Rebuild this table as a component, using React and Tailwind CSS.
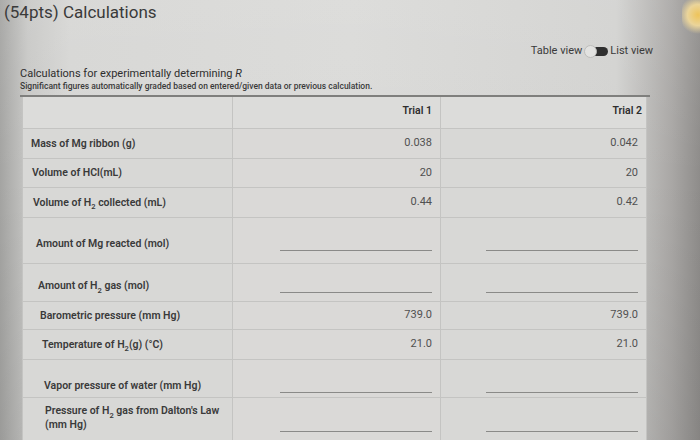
import React from "react";

const H2 = () => (
  <span>
    H<sub className="text-[7.5px] align-[-2px]">2</sub>
  </span>
);

const rows = [
  { label: <>Mass of Mg ribbon (g)</>, v1: "0.038", v2: "0.042", h: "h-[30px]", pl: "pl-[8px]" },
  { label: <>Volume of HCl(mL)</>, v1: "20", v2: "20", h: "h-[29px]", pl: "pl-[9px]" },
  { label: <>Volume of <H2 /> collected (mL)</>, v1: "0.44", v2: "0.42", h: "h-[30px]", pl: "pl-[10px]" },
  { label: <>Amount of Mg reacted (mol)</>, input: true, h: "h-[46px]", pl: "pl-[13px]", pb: "pb-[12px]" },
  { label: <>Amount of <H2 /> gas (mol)</>, input: true, h: "h-[38px]", pl: "pl-[15px]", pb: "pb-[8px]" },
  { label: <>Barometric pressure (mm Hg)</>, v1: "739.0", v2: "739.0", h: "h-[28px]", pl: "pl-[17px]" },
  { label: <>Temperature of H<sub className="text-[7.5px] align-[-2px]">2</sub>(g) (°C)</>, v1: "21.0", v2: "21.0", h: "h-[30px]", pl: "pl-[19px]" },
  { label: <>Vapor pressure of water (mm Hg)</>, input: true, h: "h-[38px]", pl: "pl-[21px]", pb: "pb-[4px]" },
  { label: <>Pressure of <H2 /> gas from Dalton's Law<br />(mm Hg)</>, input: true, h: "h-[44px]", pl: "pl-[22px]", pb: "pb-[9px]" },
];

export default function App() {
  return (
    <div className="relative w-[700px] h-[440px] overflow-hidden font-['Roboto',sans-serif] text-[#333] bg-[linear-gradient(to_right,#a4a4a2_0%,#c8c8c6_4%,#d6d6d4_10%,#dadad8_50%,#d2d2d0_88%,#a9a7a5_96%,#8e8c8a_100%)]">
      <div className="absolute inset-0 pointer-events-none bg-[linear-gradient(to_bottom,rgba(255,255,255,0.08)_0%,rgba(0,0,0,0)_40%,rgba(0,0,0,0.06)_100%)]" />
      <div className="absolute right-[-14px] top-[-6px] w-[32px] h-[42px] rounded-full bg-[radial-gradient(circle,#eec45a_0%,#ead49a_40%,rgba(230,220,190,0)_72%)] pointer-events-none" />

      <div className="relative">
        <div className="pl-[4px] pt-[1px] text-[17px] leading-[22px] text-[#3a3a3a]">(54pts) Calculations</div>

        <div className="flex justify-end items-center pr-[47px] mt-[21px] text-[11px] leading-[14px] text-[#3a3a3a]">
          <span>Table view</span>
          <span className="relative ml-[2px] mr-[2px] w-[24px] h-[12px] flex items-center">
            <span className="absolute right-0 w-[16px] h-[9px] rounded-full bg-[#2f2f2f]" />
            <span className="absolute left-0 w-[13px] h-[13px] rounded-full bg-[#e2e2e0] border border-[#bdbdbb]" />
          </span>
          <span>List view</span>
        </div>

        <div className="pl-[20px] mt-[9px]">
          <div className="text-[11px] leading-[13px] text-[#2e2e2e]">
            Calculations for experimentally determining <i>R</i>
          </div>
          <div className="text-[8.5px] leading-[12px] font-medium text-[#3a3a3a]">
            Significant figures automatically graded based on entered/given data or previous calculation.
          </div>
        </div>

        <div className="ml-[20px] mt-[3px] w-[630px] h-[2px] bg-[#7f7f7d]" />

        <div className="ml-[22px] w-[624px] border-l border-[#c4c4c2] text-[10.5px]">
          <div className="grid grid-cols-[210px_208px_206px] h-[32px]">
            <div className="border-r border-b border-[#c4c4c2] bg-[#dcdcda]" />
            <div className="border-r border-b border-[#c4c4c2] bg-[#dcdcda] flex items-center justify-end pr-[8px] pb-[3px] font-semibold text-[#2e2e2e]">Trial 1</div>
            <div className="border-r border-b border-[#c4c4c2] bg-[#dcdcda] flex items-center justify-end pr-[4px] pb-[3px] font-semibold text-[#2e2e2e]">Trial 2</div>
          </div>
          {rows.map((r, i) => (
            <div key={i} className={`grid grid-cols-[210px_208px_206px] ${r.h}`}>
              <div className={`border-r border-b border-[#c4c4c2] bg-[#d8d8d6] flex ${r.input ? "items-end" : "items-center"} ${r.pl} ${r.pb || ""} font-semibold text-[#3a3a3a] leading-[14px]`}>
                <div>{r.label}</div>
              </div>
              <div className={`border-r border-b border-[#c4c4c2] bg-[#dad9d7] flex ${r.input ? "items-end" : "items-center"} justify-end pr-[8px] ${r.pb || ""} text-[#505050] text-[11px]`}>
                {r.input ? <div className="w-[152px] h-[1px] bg-[#8a8a88]" /> : r.v1}
              </div>
              <div className={`border-r border-b border-[#c4c4c2] bg-[#d8d8d6] flex ${r.input ? "items-end" : "items-center"} justify-end pr-[8px] ${r.pb || ""} text-[#505050] text-[11px]`}>
                {r.input ? <div className="w-[152px] h-[1px] bg-[#8a8a88]" /> : r.v2}
              </div>
            </div>
          ))}
        </div>
      </div>
    </div>
  );
}
